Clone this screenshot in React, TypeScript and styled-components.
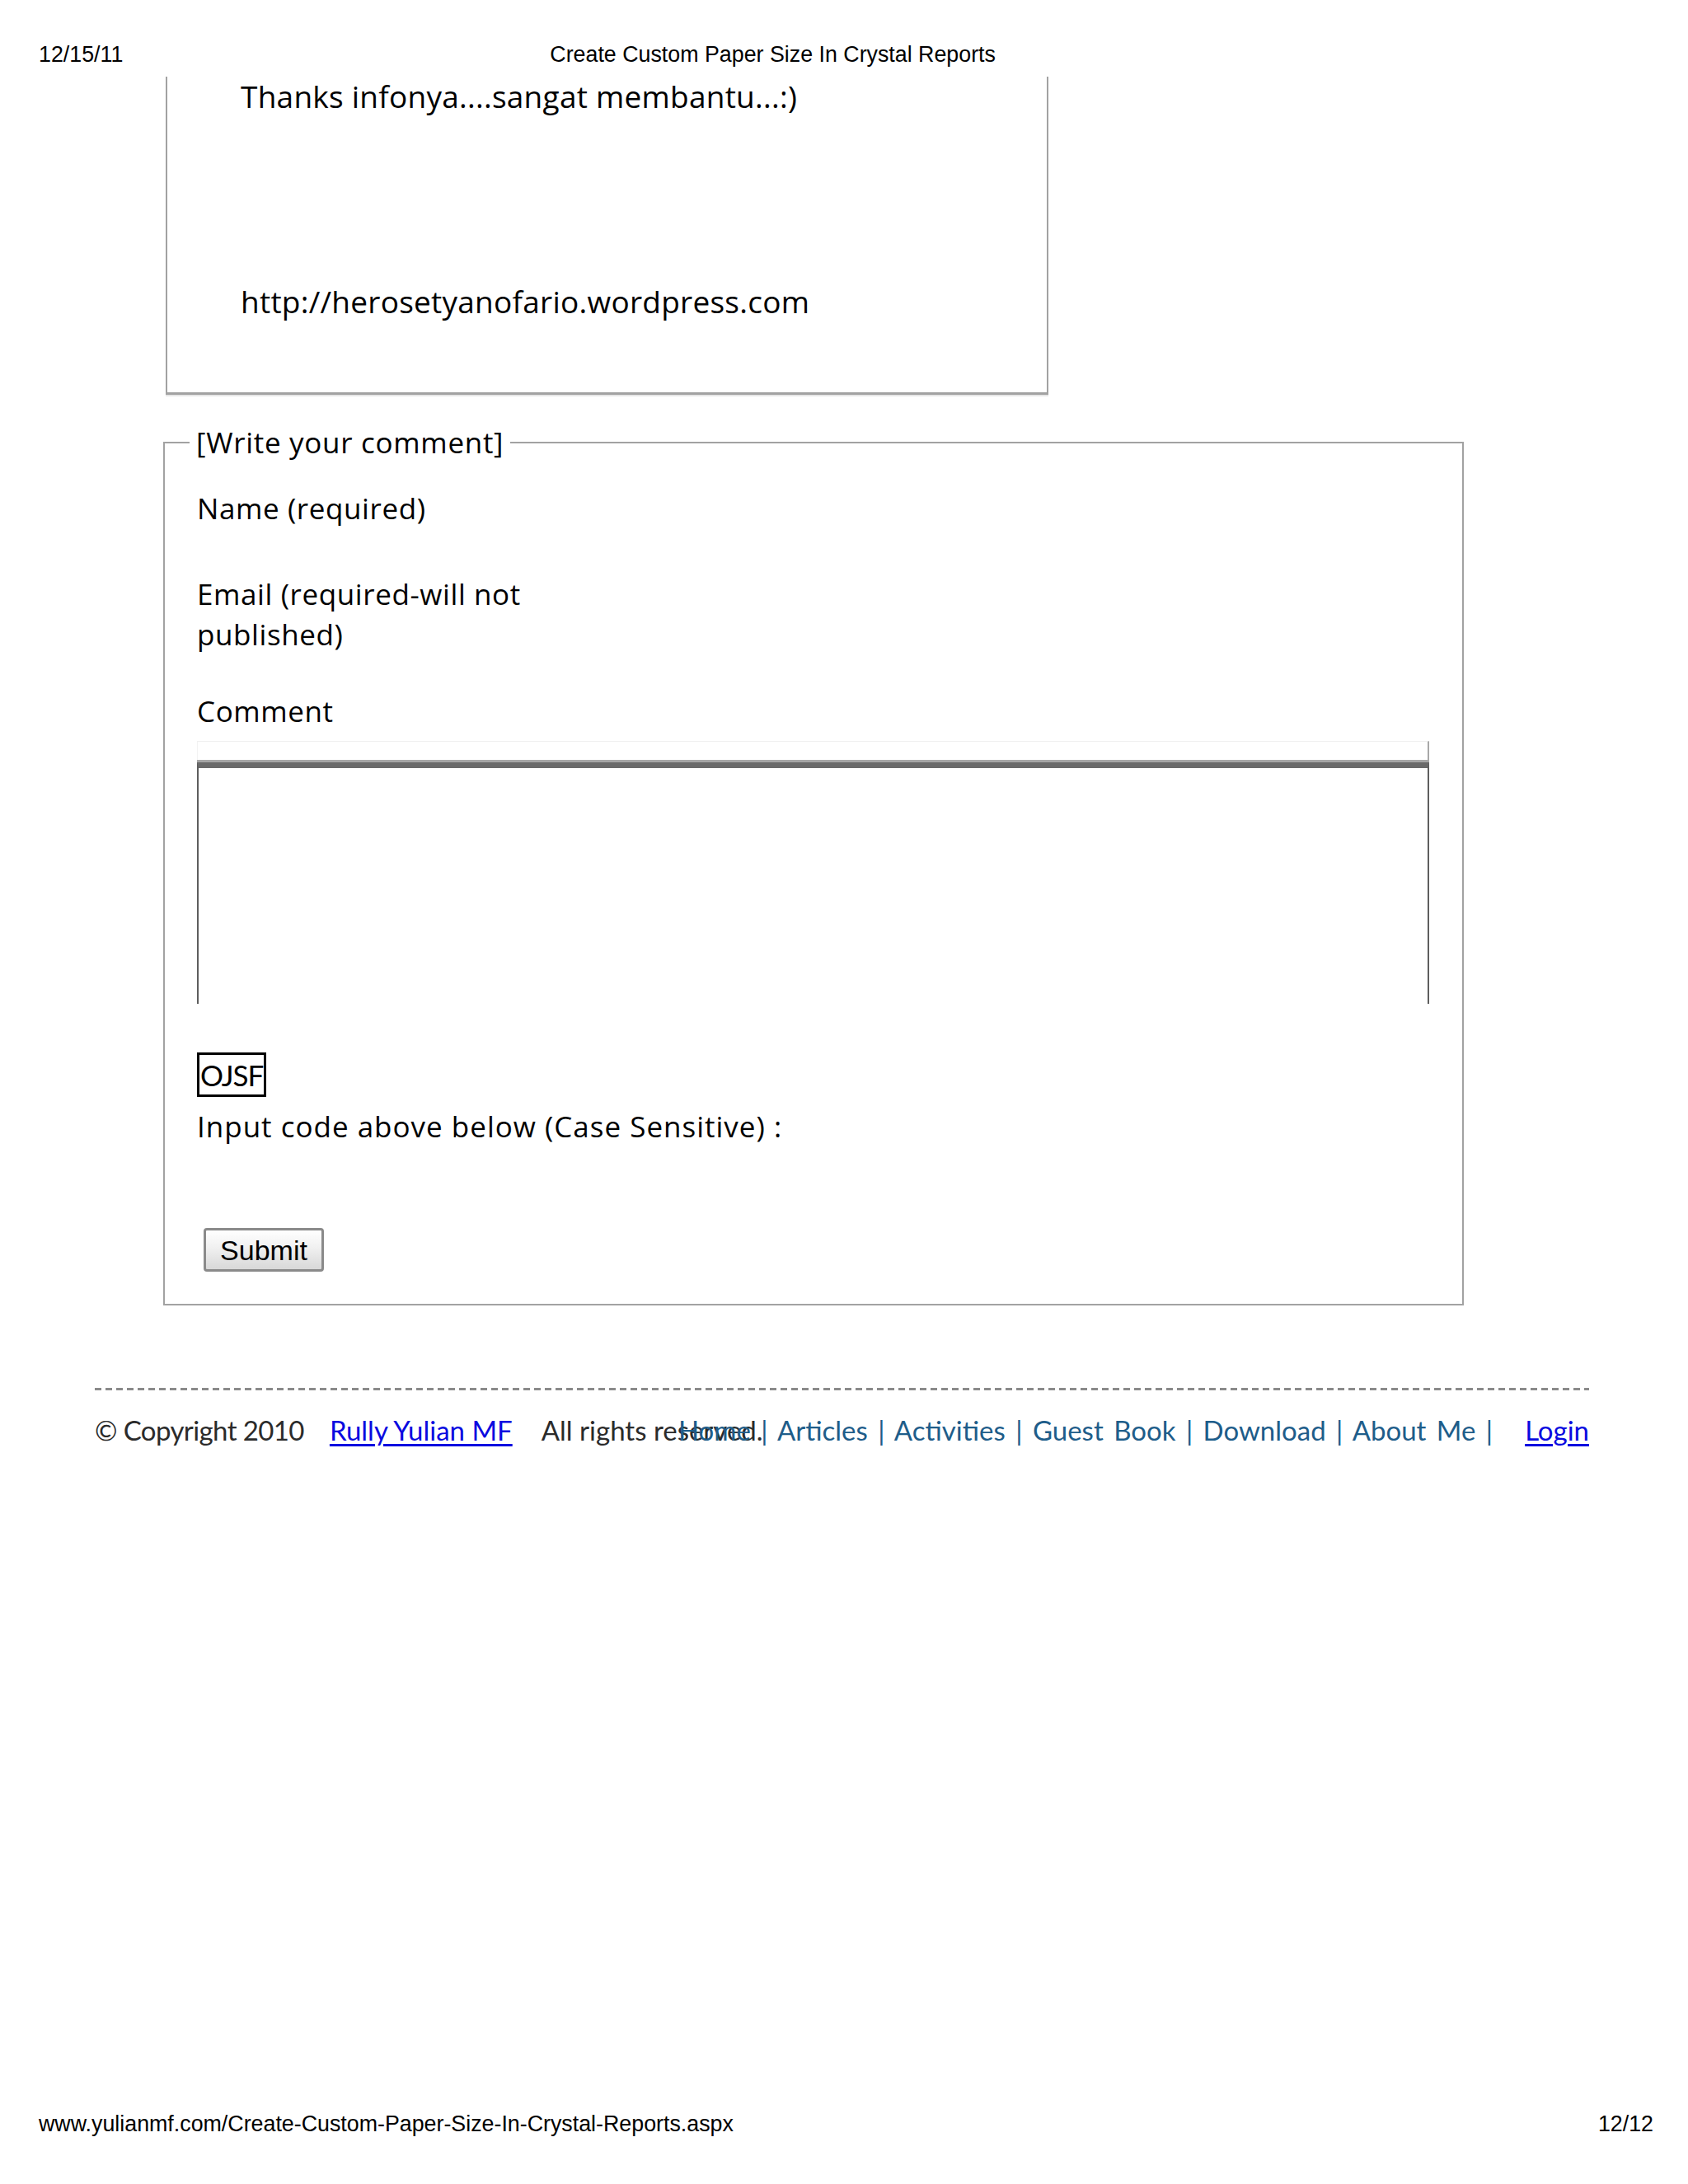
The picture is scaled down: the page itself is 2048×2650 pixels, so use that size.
import React from "react";
import styled, { createGlobalStyle } from "styled-components";

const GlobalStyle = createGlobalStyle`
  html, body {
    margin: 0;
    padding: 0;
    background: #ffffff;
  }
  body {
    font-family: "Open Sans", Lato, sans-serif;
    color: #000;
  }
`;

const Page = styled.div`
  width: 2048px;
  min-height: 2650px;
  display: flex;
  flex-direction: column;
`;

/* Browser print header / footer lines */
const PrintBar = styled.div<{ $top?: boolean }>`
  display: flex;
  align-items: center;
  height: 30px;
  font: 26.8px/30px "Liberation Sans", Arial, sans-serif;
  color: #000;
  ${(p) =>
    p.$top
      ? `padding: 51px 47px 0; gap: 518px;`
      : `padding: 0 42px 58px 47px; margin-top: auto; justify-content: space-between;`}
`;

/* Previous comment, continued from the last page */
const PrevComment = styled.div`
  margin: 12px 0 0 201px;
  width: 1071px;
  box-sizing: border-box;
  border: 2px solid #a2a2a2;
  border-top: none;
  border-bottom-width: 3px;
  box-shadow: 0 2px 0 #e6e6e6;
  padding: 1px 0 87px 89px;
`;

const CommentLine = styled.p`
  margin: 0;
  font-size: 37px;
  line-height: 46px;
  letter-spacing: 0.25px;
  & + & {
    margin-top: 203px;
  }
`;

const FormSet = styled.fieldset`
  margin: 38px 0 0 198px;
  width: 1578px;
  box-sizing: border-box;
  border: 2px solid #a2a2a2;
  padding: 0 0 39px 30px;
  min-inline-size: 0;
`;

const Legend = styled.legend`
  padding: 0 8px;
  font-size: 35px;
  line-height: 40px;
  letter-spacing: 0.7px;
`;

const FormBody = styled.div`
  padding: 35px 0 0 9px;
  display: flex;
  flex-direction: column;
  align-items: flex-start;
`;

const Label = styled.div<{ $gap?: number; $wide?: boolean }>`
  width: ${(p) => (p.$wide ? "auto" : "420px")};
  font-size: 35px;
  line-height: 49px;
  letter-spacing: ${(p) => (p.$wide ? "1px" : "0.6px")};
  margin-top: ${(p) => p.$gap ?? 0}px;
`;

const FieldCap = styled.div`
  margin-top: 12px;
  width: 1495px;
  height: 23px;
  box-sizing: border-box;
  border-top: 1px solid #efefef;
  border-left: 1px solid #f3f3f3;
  border-right: 2px solid #a8a8a8;
`;

const CommentArea = styled.textarea`
  display: block;
  width: 1495px;
  height: 293px;
  box-sizing: border-box;
  margin: 3px 0 0;
  padding: 0;
  resize: none;
  outline: none;
  background: #fff;
  border: 2px solid #5e5e5e;
  border-bottom: none;
  border-top: 7px solid #6a6a6a;
  box-shadow: 0 -3px 0 #a6a6a6;
`;

const Captcha = styled.span`
  margin-top: 59px;
  display: inline-block;
  border: 3px solid #000;
  padding: 0 1px;
  font-family: Lato, sans-serif;
  font-size: 35px;
  line-height: 48px;
  letter-spacing: -1px;
`;

const SubmitButton = styled.button`
  margin: 99px 0 0 8px;
  width: 146px;
  height: 53px;
  box-sizing: border-box;
  border: 3px solid #8a8a8a;
  border-radius: 4px;
  background: linear-gradient(#ffffff 0%, #f0f0f0 45%, #d8d8d8 100%);
  font: 34px/1 "Liberation Sans", Arial, sans-serif;
  color: #000;
  padding: 0;
`;

const Rule = styled.div`
  margin: 100px 0 0 115px;
  width: 1813px;
  height: 3px;
  background: repeating-linear-gradient(
    to right,
    #8a8a8a 0 8px,
    transparent 8px 13px
  );
`;

const FooterRow = styled.div`
  margin: 28px 0 0 115px;
  width: 1813px;
  display: grid;
  grid-template-columns: minmax(0, 1fr) auto;
  font-family: Lato, sans-serif;
  font-size: 33px;
  line-height: 40px;
`;

const Credits = styled.div`
  display: flex;
  white-space: nowrap;
  color: #2b2b2b;
`;

const Copyright = styled.span`
  letter-spacing: -0.6px;
`;

const Link = styled.a<{ $gap?: number }>`
  color: #0a0ae0;
  text-decoration: underline;
  text-underline-offset: 4px;
  margin-left: ${(p) => p.$gap ?? 0}px;
`;

const Reserved = styled.span`
  margin-left: 35px;
`;

const Nav = styled.nav`
  display: flex;
  white-space: pre;
  word-spacing: 4px;
  color: #1e5d8a;
`;

const navItems = ["Home", "Articles", "Activities", "Guest Book", "Download", "About Me"];

export default function App() {
  return (
    <>
      <GlobalStyle />
      <Page>
        <PrintBar $top>
          <span>12/15/11</span>
          <span>Create Custom Paper Size In Crystal Reports</span>
        </PrintBar>

        <PrevComment>
          <CommentLine>Thanks infonya....sangat membantu...:)</CommentLine>
          <CommentLine>http://herosetyanofario.wordpress.com</CommentLine>
        </PrevComment>

        <FormSet>
          <Legend>[Write your comment]</Legend>
          <FormBody>
            <Label>Name (required)</Label>
            <Label $gap={55}>Email (required-will not published)</Label>
            <Label $gap={44}>Comment</Label>
            <FieldCap />
            <CommentArea aria-label="Comment" />
            <Captcha>OJSF</Captcha>
            <Label $gap={11} $wide>
              Input code above below (Case Sensitive) :
            </Label>
            <SubmitButton type="button">Submit</SubmitButton>
          </FormBody>
        </FormSet>

        <Rule />
        <FooterRow>
          <Credits>
            <Copyright>© Copyright 2010</Copyright>
            <Link href="#" $gap={31}>
              Rully Yulian MF
            </Link>
            <Reserved>All rights reserved.</Reserved>
          </Credits>
          <Nav>
            <span>{navItems.join(" | ") + " |"}</span>
            <Link href="#" $gap={39}>
              Login
            </Link>
          </Nav>
        </FooterRow>

        <PrintBar>
          <span>www.yulianmf.com/Create-Custom-Paper-Size-In-Crystal-Reports.aspx</span>
          <span>12/12</span>
        </PrintBar>
      </Page>
    </>
  );
}
